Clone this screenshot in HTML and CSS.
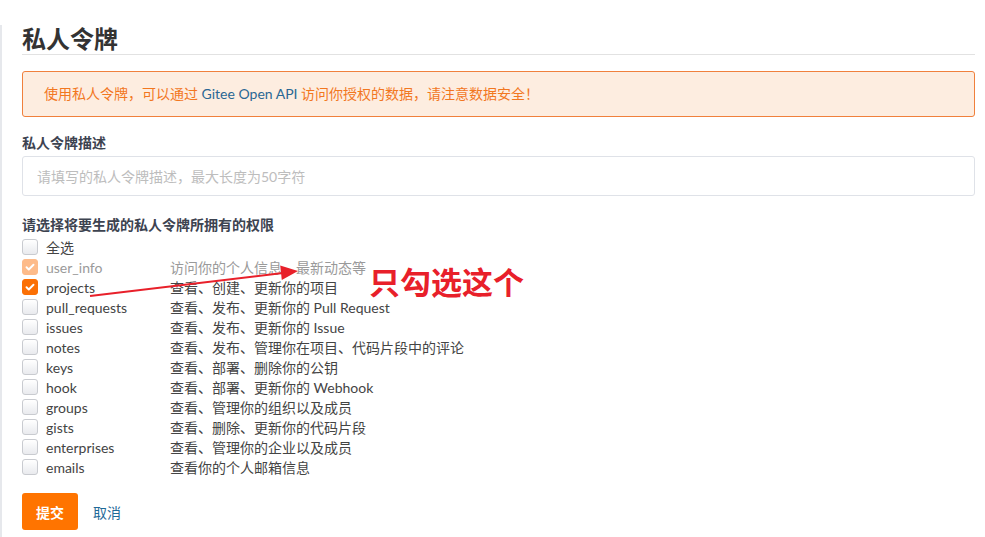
FILE: index.html
```html
<!DOCTYPE html>
<html lang="zh-CN">
<head>
  <meta charset="UTF-8" />
  <title>私人令牌</title>
  <link rel="stylesheet" href="styles.css">
</head>
<body>
  <div class="page">
    <h1 class="title">私人令牌</h1>

    <div class="alert">
      使用私人令牌，可以通过 <span class="alert-link">Gitee Open API</span> 访问你授权的数据，请注意数据安全！
    </div>

    <div class="field-label">私人令牌描述</div>
    <input class="text-input" type="text" placeholder="请填写的私人令牌描述，最大长度为50字符" />

    <div class="field-label scopes-label">请选择将要生成的私人令牌所拥有的权限</div>

    <div class="scopes">
      <div class="scope">
        <span class="box"></span>
        <span class="name">全选</span>
      </div>
      <div class="scope disabled">
        <span class="box checked">
          <svg viewBox="0 0 16 16"><path d="M4 8.3l2.6 2.5L12 5.4" /></svg>
        </span>
        <span class="name">user_info</span>
        <span class="desc">访问你的个人信息、最新动态等</span>
      </div>
      <div class="scope">
        <span class="box checked">
          <svg viewBox="0 0 16 16"><path d="M4 8.3l2.6 2.5L12 5.4" /></svg>
        </span>
        <span class="name">projects</span>
        <span class="desc">查看、创建、更新你的项目</span>
      </div>
      <div class="scope">
        <span class="box"></span>
        <span class="name">pull_requests</span>
        <span class="desc">查看、发布、更新你的 Pull Request</span>
      </div>
      <div class="scope">
        <span class="box"></span>
        <span class="name">issues</span>
        <span class="desc">查看、发布、更新你的 Issue</span>
      </div>
      <div class="scope">
        <span class="box"></span>
        <span class="name">notes</span>
        <span class="desc">查看、发布、管理你在项目、代码片段中的评论</span>
      </div>
      <div class="scope">
        <span class="box"></span>
        <span class="name">keys</span>
        <span class="desc">查看、部署、删除你的公钥</span>
      </div>
      <div class="scope">
        <span class="box"></span>
        <span class="name">hook</span>
        <span class="desc">查看、部署、更新你的 Webhook</span>
      </div>
      <div class="scope">
        <span class="box"></span>
        <span class="name">groups</span>
        <span class="desc">查看、管理你的组织以及成员</span>
      </div>
      <div class="scope">
        <span class="box"></span>
        <span class="name">gists</span>
        <span class="desc">查看、删除、更新你的代码片段</span>
      </div>
      <div class="scope">
        <span class="box"></span>
        <span class="name">enterprises</span>
        <span class="desc">查看、管理你的企业以及成员</span>
      </div>
      <div class="scope">
        <span class="box"></span>
        <span class="name">emails</span>
        <span class="desc">查看你的个人邮箱信息</span>
      </div>
    </div>

    <div class="actions">
      <button class="btn-submit" type="button">提交</button>
      <a class="btn-cancel" href="#">取消</a>
    </div>
  </div>

  <!-- annotation drawn over the screenshot -->
  <svg class="annot-arrow" viewBox="0 0 985 537">
    <line x1="90" y1="296" x2="283" y2="273" />
    <polygon points="298,271 281.8,280 280.2,265.6" />
  </svg>
  <div class="annot-text">只勾选这个</div>
</body>
</html>
```

FILE: styles.css
```css
* {
  margin: 0;
  padding: 0;
  box-sizing: border-box;
}
body {
  font-family: Lato, "Noto Sans CJK SC", sans-serif;
  font-size: 14px;
  color: #444;
  background: #fff;
  width: 985px;
  height: 537px;
  overflow: hidden;
  position: relative;
}
.page {
  margin-top: 25px;
  border-left: 2px solid #e6e8ec;
  padding: 0 10px 0 20px;
  height: 512px;
}
.title {
  font-size: 24px;
  line-height: 28px;
  font-weight: bold;
  color: #333;
  padding-bottom: 1px;
  border-bottom: 1px solid #e2e2e2;
}
.alert {
  margin-top: 16px;
  height: 46px;
  line-height: 44px;
  padding: 0 21px;
  background: #fdede0;
  border: 1px solid #f0803c;
  border-radius: 3px;
  color: #f2771f;
}
.alert-link {
  color: #2a6794;
}
.field-label {
  margin-top: 16px;
  line-height: 20px;
  font-weight: bold;
  color: #3d4350;
}
.text-input {
  display: block;
  margin-top: 3px;
  width: 100%;
  height: 40px;
  border: 1px solid #dfe2e8;
  border-radius: 3px;
  padding: 0 14px;
  font-family: inherit;
  font-size: 14px;
  color: #444;
  outline: none;
}
.text-input::placeholder {
  color: #bdbdbd;
}
.scopes-label {
  margin-top: 19px;
}
.scopes {
  margin-top: 2px;
  display: flex;
  flex-direction: column;
}
.scope {
  display: flex;
  align-items: center;
  height: 20px;
}
.box {
  width: 16px;
  height: 16px;
  border: 1px solid #c9cbd0;
  border-radius: 3px;
  background: linear-gradient(#fff, #e9eaee);
  display: flex;
  align-items: center;
  justify-content: center;
}
.box.checked {
  background: #fb7005;
  border-color: #fb7005;
}
.box svg {
  width: 16px;
  height: 16px;
  fill: none;
  stroke: #fff;
  stroke-width: 2.2;
  stroke-linecap: round;
  stroke-linejoin: round;
}
.disabled .box.checked {
  background: #fdbb8a;
  border-color: #fdbb8a;
}
.name {
  margin-left: 8px;
  width: 124px;
}
.disabled .name,
.disabled .desc {
  color: #9a9a9a;
}
.actions {
  margin-top: 16px;
  display: flex;
  align-items: center;
}
.btn-submit {
  width: 56px;
  height: 37px;
  background: #ff7400;
  color: #fff;
  border: none;
  border-radius: 3px;
  font-family: inherit;
  font-size: 14px;
  font-weight: bold;
}
.btn-cancel {
  margin-left: 15px;
  color: #1f6a98;
  text-decoration: none;
}
.annot-arrow {
  position: absolute;
  left: 0;
  top: 0;
  width: 985px;
  height: 537px;
  pointer-events: none;
}
.annot-arrow line {
  stroke: #e8202a;
  stroke-width: 2;
}
.annot-arrow polygon {
  fill: #e8202a;
}
.annot-text {
  position: absolute;
  left: 369px;
  top: 260px;
  font-family: "Noto Sans CJK SC", sans-serif;
  font-size: 31px;
  line-height: 42px;
  font-weight: bold;
  color: #e8202a;
}
```
